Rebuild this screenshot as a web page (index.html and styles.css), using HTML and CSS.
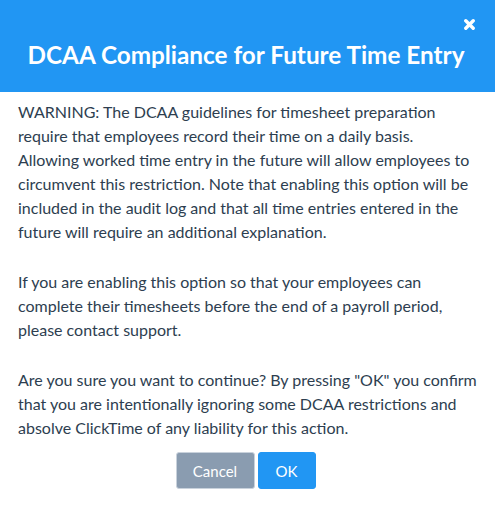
FILE: index.html
```html
<!DOCTYPE html>
<html>
<head>
<meta charset="utf-8">
<link rel="stylesheet" href="styles.css">
</head>
<body>
<div class="modal">
  <div class="modal-header">
    <button class="close" aria-label="Close">
      <svg width="11" height="11" viewBox="0 0 11 11"><path d="M1.8 1.8 L9.2 9.2 M9.2 1.8 L1.8 9.2" stroke="#fff" stroke-width="3.4" stroke-linecap="round"/></svg>
    </button>
    <h1 class="title">DCAA Compliance for Future Time Entry</h1>
  </div>
  <div class="modal-body">
    <p>WARNING: The DCAA guidelines for timesheet preparation require that employees record their time on a daily basis. Allowing worked time entry in the future will allow employees to circumvent this restriction. Note that enabling this option will be included in the audit log and that all time entries entered in the future will require an additional explanation.</p>
    <p>If you are enabling this option so that your employees can complete their timesheets before the end of a payroll period, please contact support.</p>
    <p>Are you sure you want to continue? By pressing "OK" you confirm that you are intentionally ignoring some DCAA restrictions and absolve ClickTime of any liability for this action.</p>
  </div>
  <div class="modal-footer">
    <button class="btn btn-cancel">Cancel</button>
    <button class="btn btn-ok">OK</button>
  </div>
</div>
</body>
</html>
```
FILE: styles.css
```css
html, body {
  margin: 0;
  padding: 0;
  background: #fff;
}
body {
  font-family: Lato, "Noto Sans", sans-serif;
}
.modal {
  width: 495px;
  height: 508px;
  background: #fff;
  display: flex;
  flex-direction: column;
}
.modal-header {
  background: #2196f3;
  height: 92px;
  position: relative;
  display: flex;
  align-items: flex-end;
  justify-content: center;
  padding-right: 3px;
}
.title {
  margin: 0 0 22px;
  color: #fff;
  font-size: 24.3px;
  font-weight: 700;
  line-height: 30px;
}
.close {
  position: absolute;
  top: 19px;
  right: 20px;
  width: 11px;
  height: 11px;
  padding: 0;
  border: 0;
  background: none;
  display: block;
}
.close svg { display: block; }
.modal-body {
  padding: 8px 18px 0;
  color: #2d3e50;
  font-size: 16px;
  line-height: 24px;
}
.modal-body p {
  margin: 0 0 26px;
}
.modal-body p:last-child {
  margin-bottom: 0;
}
.modal-footer {
  display: flex;
  justify-content: center;
  gap: 3px;
  margin-top: 12px;
  padding-right: 4px;
}
.btn {
  font-family: Lato, "Noto Sans", sans-serif;
  font-size: 15px;
  color: #fff;
  height: 37px;
  border-radius: 3px;
  padding: 0;
}
.btn-cancel {
  width: 79px;
  background: #8a9cb0;
  border: 1px solid #c9d2dc;
}
.btn-ok {
  width: 58px;
  background: #2196f3;
  border: 1px solid #2196f3;
}
```
